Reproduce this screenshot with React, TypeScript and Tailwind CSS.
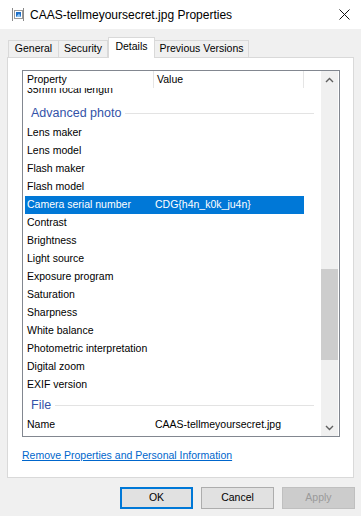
import React from "react"

const rows = [
  "Lens maker",
  "Lens model",
  "Flash maker",
  "Flash model",
]

const rows2 = [
  "Contrast",
  "Brightness",
  "Light source",
  "Exposure program",
  "Saturation",
  "Sharpness",
  "White balance",
  "Photometric interpretation",
  "Digital zoom",
  "EXIF version",
]

function Row({ name, value, selected }: { name: string; value?: string; selected?: boolean }) {
  return (
    <div
      className={
        "flex h-[18px] shrink-0 items-center ml-[2px] w-[279px] " +
        (selected ? "bg-[#0078d7] text-white" : "text-[#000]")
      }
    >
      <div className="w-[130px] pl-[2px] whitespace-nowrap">{name}</div>
      <div className="whitespace-nowrap">{value}</div>
    </div>
  )
}

function Group({ title }: { title: string }) {
  return (
    <div className="flex h-[21px] shrink-0 items-center pl-[8px] pr-[7px]">
      <span className="text-[12.5px] text-[#3353a8] whitespace-nowrap">{title}</span>
      <div className="ml-[4px] h-px flex-1 bg-[#e3e3e3]" />
    </div>
  )
}

export default function App() {
  return (
    <div className="w-[361px] h-[516px] overflow-hidden bg-[#f0f0f0] font-['Liberation_Sans',Arial,sans-serif] text-[10.5px] text-black">
      {/* Title bar */}
      <div className="flex h-[29px] items-center bg-white pl-[12px] pr-[11px]">
        <svg width="12" height="13" viewBox="0 0 12 13">
          <rect x="0" y="0" width="1" height="13" fill="#8a8a8a" />
          <rect x="2.5" y="2.5" width="8" height="8" fill="#fff" stroke="#9a9a9a" />
          <rect x="4" y="4" width="5" height="5" fill="#1e6fc8" />
          <path d="M4 9 L7 5.5 L9 9 Z" fill="#8fc3f0" />
          <rect x="11" y="0" width="1" height="13" fill="#8a8a8a" />
        </svg>
        <span className="ml-[6px] text-[12px] text-black">CAAS-tellmeyoursecret.jpg Properties</span>
        <svg className="ml-auto" width="11" height="11" viewBox="0 0 11 11">
          <path d="M0.5 0.5 L10.5 10.5 M10.5 0.5 L0.5 10.5" stroke="#111" strokeWidth="1" />
        </svg>
      </div>

      {/* Tabs */}
      <div className="mt-[8px] flex h-[20px] items-end pl-[8px]">
        <div className="flex h-[17px] w-[51px] items-center justify-center border border-b-0 border-[#d9d9d9] bg-[#f0f0f0]">General</div>
        <div className="flex h-[17px] w-[49px] items-center justify-center border border-b-0 border-l-0 border-[#d9d9d9] bg-[#f0f0f0]">Security</div>
        <div className="relative z-10 -mb-px flex h-[21px] w-[47px] items-center justify-center border border-b-0 border-[#d9d9d9] bg-white pb-[3px]">Details</div>
        <div className="flex h-[17px] w-[94px] items-center justify-center border border-b-0 border-l-0 border-[#d9d9d9] bg-[#f0f0f0]">Previous Versions</div>
      </div>

      {/* Panel */}
      <div className="ml-[7px] flex h-[421px] w-[347px] flex-col border border-[#d9d9d9] bg-white pt-[12px]">
        <div className="ml-[14px] flex h-[367px] w-[318px] border border-[#828790] bg-white">
          <div className="flex w-[298px] flex-col">
            {/* Header */}
            <div className="flex h-[17px] shrink-0 items-center">
              <div className="w-[130px] pl-[4px]">Property</div>
              <div className="h-full w-px bg-[#e5e5e5]" />
              <div className="w-[149px] pl-[3px]">Value</div>
              <div className="h-full w-px bg-[#e5e5e5]" />
            </div>
            <div className="flex flex-1 flex-col overflow-hidden">
              {/* row scrolled partly under the header */}
              <div className="h-[15px] shrink-0 overflow-hidden">
                <div className="-mt-[7px]">
                  <Row name="35mm focal length" />
                </div>
              </div>
              <Group title="Advanced photo" />
              {rows.map((r) => (
                <Row key={r} name={r} />
              ))}
              <Row name="Camera serial number" value="CDG{h4n_k0k_ju4n}" selected />
              {rows2.map((r) => (
                <Row key={r} name={r} />
              ))}
              <div className="flex h-[22px] shrink-0 items-center pl-[8px] pr-[7px]">
                <span className="text-[12.5px] text-[#3353a8]">File</span>
                <div className="ml-[4px] h-px flex-1 bg-[#e3e3e3]" />
              </div>
              <Row name="Name" value="CAAS-tellmeyoursecret.jpg" />
            </div>
          </div>
          {/* Scrollbar */}
          <div className="flex w-[17px] flex-col bg-[#f0f0f0]">
            <div className="flex h-[17px] items-center justify-center">
              <svg width="9" height="6" viewBox="0 0 9 6">
                <path d="M1 5 L4.5 1.5 L8 5" fill="none" stroke="#606060" strokeWidth="1.4" />
              </svg>
            </div>
            <div className="flex flex-1 flex-col pt-[181px]">
              <div className="h-[91px] bg-[#cdcdcd]" />
            </div>
            <div className="flex h-[17px] items-center justify-center">
              <svg width="9" height="6" viewBox="0 0 9 6">
                <path d="M1 1 L4.5 4.5 L8 1" fill="none" stroke="#606060" strokeWidth="1.4" />
              </svg>
            </div>
          </div>
        </div>
        <div className="ml-[14px] mt-[11px]">
          <span className="text-[#0066cc] underline">Remove Properties and Personal Information</span>
        </div>
      </div>

      {/* Buttons */}
      <div className="mt-[9px] flex justify-end gap-[8px] pr-[6px]">
        <button className="h-[22px] w-[73px] border-2 border-[#0078d7] bg-[#e1e1e1] text-black">OK</button>
        <button className="h-[22px] w-[73px] border border-[#adadad] bg-[#e1e1e1] text-black">Cancel</button>
        <button className="h-[22px] w-[73px] border border-[#bfbfbf] bg-[#cccccc] text-[#9a9a9a]">Apply</button>
      </div>
    </div>
  )
}
